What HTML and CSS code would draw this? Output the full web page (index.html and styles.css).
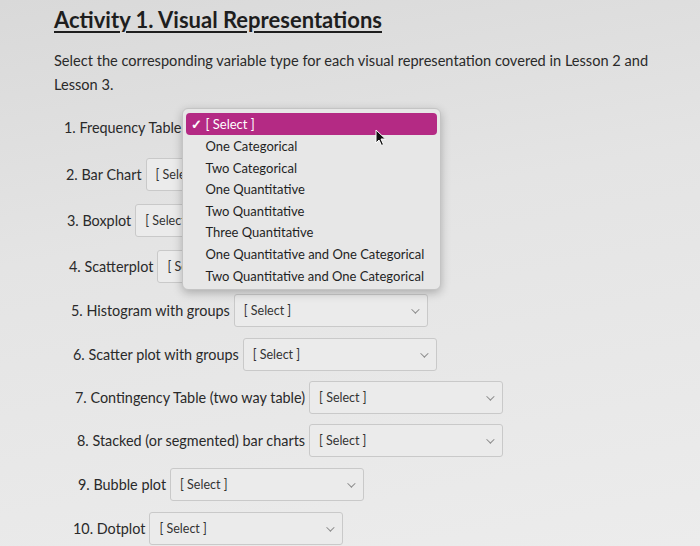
FILE: index.html
```html
<!DOCTYPE html>
<html>
<head>
<meta charset="utf-8">
<link rel="stylesheet" href="styles.css">
</head>
<body>
<div class="page">
  <h1 class="title">Activity 1. Visual Representations</h1>
  <p class="intro">Select the corresponding variable type for each visual representation covered in Lesson 2 and Lesson 3.</p>
  <div class="rows">
    <div class="row r1">
      <span class="label">1. Frequency Table</span>
      <div class="select-wrap">
        <div class="select"><span>[ Select ]</span><span class="chev"></span></div>
        <div class="menu">
          <div class="opt active"><span class="check">✓</span><span>[ Select ]</span></div>
          <div class="opt">One Categorical</div>
          <div class="opt">Two Categorical</div>
          <div class="opt">One Quantitative</div>
          <div class="opt">Two Quantitative</div>
          <div class="opt">Three Quantitative</div>
          <div class="opt">One Quantitative and One Categorical</div>
          <div class="opt">Two Quantitative and One Categorical</div>
          <svg class="cursor" width="12" height="18" viewBox="0 0 12 18"><path d="M1 1 L1 14 L4 11 L6.5 16.5 L8.5 15.5 L6 10 L10.5 10 Z" fill="#111" stroke="#fff" stroke-width="1"/></svg>
        </div>
      </div>
    </div>
    <div class="row r2">
      <span class="label">2. Bar Chart</span>
      <div class="select"><span>[ Select ]</span><span class="chev"></span></div>
    </div>
    <div class="row r3">
      <span class="label">3. Boxplot</span>
      <div class="select"><span>[ Select ]</span><span class="chev"></span></div>
    </div>
    <div class="row r4">
      <span class="label">4. Scatterplot</span>
      <div class="select"><span>[ Select ]</span><span class="chev"></span></div>
    </div>
    <div class="row r5">
      <span class="label">5. Histogram with groups</span>
      <div class="select"><span>[ Select ]</span><span class="chev"></span></div>
    </div>
    <div class="row r6">
      <span class="label">6. Scatter plot with groups</span>
      <div class="select"><span>[ Select ]</span><span class="chev"></span></div>
    </div>
    <div class="row r7">
      <span class="label">7. Contingency Table (two way table)</span>
      <div class="select"><span>[ Select ]</span><span class="chev"></span></div>
    </div>
    <div class="row r8">
      <span class="label">8. Stacked (or segmented) bar charts</span>
      <div class="select"><span>[ Select ]</span><span class="chev"></span></div>
    </div>
    <div class="row r9">
      <span class="label">9. Bubble plot</span>
      <div class="select"><span>[ Select ]</span><span class="chev"></span></div>
    </div>
    <div class="row r10">
      <span class="label">10. Dotplot</span>
      <div class="select"><span>[ Select ]</span><span class="chev"></span></div>
    </div>
  </div>
</div>
</body>
</html>
```
FILE: styles.css
```css
html, body {
  margin: 0;
  padding: 0;
}
body {
  width: 700px;
  height: 546px;
  overflow: hidden;
  background: linear-gradient(170deg, #d9d9d9 0%, #e4e4e4 40%, #ececec 100%);
  font-family: Lato, "Open Sans", sans-serif;
  color: #2a2a2a;
}
.page {
  padding: 6px 0 0 54px;
}
.title {
  margin: 0;
  font-size: 22px;
  font-weight: 700;
  text-decoration: underline;
  text-decoration-thickness: 2px;
  text-underline-offset: 3px;
  line-height: 28px;
  color: #1e1e1e;
}
.intro {
  margin: 15px 0 0 0;
  width: 610px;
  font-size: 14.6px;
  line-height: 24px;
}
.rows {
  margin-top: 14px;
  padding-left: 10px;
  display: flex;
  flex-direction: column;
}
.row {
  display: flex;
  align-items: center;
  gap: 4px;
  height: 33px;
}
.r2 { margin-top: 14px; }
.r3, .r4 { margin-top: 13px; }
.r5, .r6, .r9, .r10 { margin-top: 11px; }
.r7, .r8 { margin-top: 10px; }
.label {
  font-size: 14.4px;
  white-space: nowrap;
}
.select-wrap {
  position: relative;
  z-index: 5;
}
.select {
  width: 194px;
  height: 33px;
  box-sizing: border-box;
  border: 1px solid #c9c9c9;
  border-radius: 3px;
  background: #ebebeb;
  display: flex;
  align-items: center;
  justify-content: space-between;
  padding: 0 10px 0 9px;
  font-size: 12.5px;
  color: #333;
}
.chev {
  width: 5px;
  height: 5px;
  border-right: 1.5px solid #8a8a8a;
  border-bottom: 1.5px solid #8a8a8a;
  transform: rotate(45deg) translateY(-2px);
}
.r2 .label { margin-left: 2px; }
.r3 .label { margin-left: 3px; }
.r4 .label { margin-left: 5px; }
.r5 .label { margin-left: 7px; }
.r6 .label { margin-left: 9px; }
.r7 .label { margin-left: 11px; }
.r8 .label { margin-left: 13px; }
.r9 .label { margin-left: 14px; }
.r10 .label { margin-left: 9px; }
.menu {
  position: absolute;
  left: -3px;
  top: -3px;
  width: 259px;
  height: 182px;
  box-sizing: border-box;
  background: #e7e7e7;
  border: 1px solid #c4c4c4;
  border-radius: 6px;
  box-shadow: 0 3px 10px rgba(0,0,0,0.25);
  padding: 4px 3px 0 3px;
}
.opt {
  height: 21.6px;
  line-height: 21.6px;
  font-size: 13px;
  color: #1f1f1f;
  padding-left: 19px;
  white-space: nowrap;
}
.opt.active {
  display: flex;
  align-items: center;
  gap: 3px;
  background: #b42a84;
  color: #fff;
  border-radius: 4px;
  padding-left: 5px;
  height: 22px;
  line-height: 22px;
  margin-bottom: 1px;
}
.check {
  font-size: 13px;
  font-weight: 700;
}
.cursor {
  position: absolute;
  left: 192px;
  top: 20px;
}
```
